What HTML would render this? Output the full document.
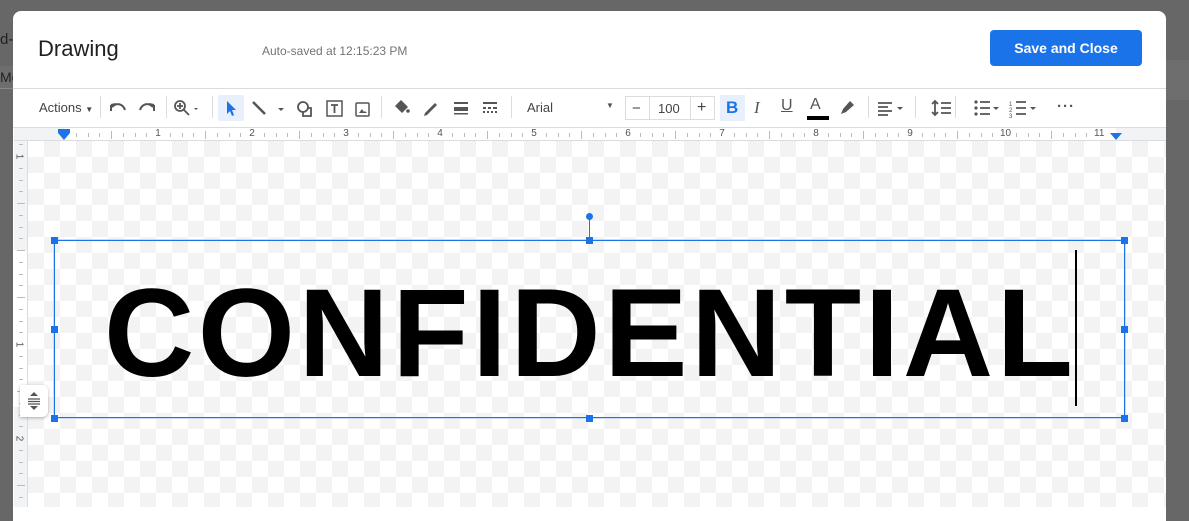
<!DOCTYPE html>
<html><head><meta charset="utf-8"><style>
*{margin:0;padding:0;box-sizing:border-box}
body{width:1189px;height:507px;overflow:hidden;background:#676767;font-family:"Liberation Sans",Arial,sans-serif;position:relative}
.a{position:absolute}
#dlg{left:13px;top:11px;width:1153px;height:510px;background:#fff;border-radius:8px 8px 0 0;overflow:hidden}
.sep{position:absolute;top:96px;width:1px;height:22px;background:#dadce0}
.tick{position:absolute;background:#bbb}
</style></head><body>
<div class="a" style="left:0;top:31px;width:13px;font-size:15px;color:#222;white-space:nowrap;overflow:hidden">d-c</div>
<div class="a" style="left:0;top:66px;width:13px;height:22px;background:#6e6e6e"></div>
<div class="a" style="left:0;top:69px;width:13px;font-size:14px;color:#222;white-space:nowrap;overflow:hidden">Me</div>
<div class="a" style="left:0;top:88px;width:13px;height:1px;background:#888"></div>
<div class="a" style="left:1166px;top:60px;width:23px;height:40px;background:#6e6e6e"></div>
<div id="dlg" class="a"></div>
<div class="a" style="left:38px;top:36px;font-size:22px;color:#202124">Drawing</div>
<div class="a" style="left:262px;top:44px;font-size:12px;color:#70757a">Auto-saved at 12:15:23 PM</div>
<div class="a" style="left:990px;top:30px;width:152px;height:36px;background:#1a73e8;border-radius:4px;color:#fff;font-size:14px;font-weight:bold;text-align:center;line-height:36px">Save and Close</div>
<div class="a" style="left:13px;top:88px;width:1153px;height:1px;background:#dadce0"></div>
<div class="a" style="left:39px;top:100px;font-size:13px;color:#444">Actions <span style="font-size:8px">▼</span></div>
<div class="sep" style="left:100px"></div>
<svg class="a" style="left:108px;top:99px" width="90" height="18" viewBox="0 0 90 18"><path d="M3 6v6M3 6l5-1M4 8c5-5 11-3 13 3" stroke="#555" stroke-width="2" fill="none"/><path d="M46 6v6M46 6l-5-1M45 8c-5-5-11-3-13 3" stroke="#555" stroke-width="2" fill="none"/><circle cx="72" cy="7" r="5" stroke="#555" stroke-width="1.8" fill="none"/><path d="M76 11l5 5M72 4v6M69 7h6" stroke="#555" stroke-width="1.8"/><path d="M86 9h4l-2 2z" fill="#555"/></svg>
<div class="sep" style="left:166px"></div>
<div class="sep" style="left:212px"></div>
<div class="a" style="left:218px;top:95px;width:26px;height:26px;background:#e8f0fe;border-radius:2px"></div>
<svg class="a" style="left:223px;top:99px" width="150" height="20" viewBox="0 0 150 20"><path d="M4 2l9 9-4 0 2 5-2 1-2-5-3 3z" fill="#1a73e8"/><path d="M30 3l12 12" stroke="#555" stroke-width="2.5"/><path d="M55 9h6l-3 3z" fill="#555"/><circle cx="80" cy="8" r="5" stroke="#555" stroke-width="1.8" fill="none"/><path d="M84 9h4v8h-8v-4" stroke="#555" stroke-width="1.8" fill="none"/><rect x="104" y="2" width="15" height="15" stroke="#555" stroke-width="1.5" fill="none"/><path d="M108 6h7M111.5 6v8" stroke="#555" stroke-width="1.8"/><rect x="133" y="4" width="13" height="13" rx="1" stroke="#555" stroke-width="1.5" fill="none"/><path d="M136 14l3-4 2 3 1-1 2 2z" fill="#555"/></svg>
<div class="sep" style="left:381px"></div>
<svg class="a" style="left:392px;top:98px" width="110" height="20" viewBox="0 0 110 20"><path d="M3 8l6-6 7 7-6 6z" fill="#555"/><circle cx="16" cy="13" r="1.8" fill="#555"/><path d="M33 15l10-10 2 2-10 10-3 1z" fill="#555"/><rect x="62" y="4" width="14" height="2" fill="#555"/><rect x="62" y="9" width="14" height="4" fill="#555"/><rect x="62" y="15" width="14" height="1.5" fill="#555"/><path d="M91 5h14M91 10h3M96 10h3M101 10h4M91 14h2M95 14h2M99 14h2M103 14h2" stroke="#555" stroke-width="2"/></svg>
<div class="sep" style="left:511px"></div>
<div class="a" style="left:527px;top:100px;font-size:13px;color:#444">Arial</div>
<div class="a" style="left:606px;top:101px;font-size:8px;color:#555">▼</div>
<div class="a" style="left:625px;top:96px;width:90px;height:24px;border:1px solid #dadce0"></div>
<div class="a" style="left:649px;top:96px;width:1px;height:24px;background:#dadce0"></div>
<div class="a" style="left:690px;top:96px;width:1px;height:24px;background:#dadce0"></div>
<div class="a" style="left:632px;top:100px;font-size:15px;color:#444">−</div>
<div class="a" style="left:658px;top:101px;font-size:13px;color:#444">100</div>
<div class="a" style="left:697px;top:99px;font-size:16px;color:#444">+</div>
<div class="a" style="left:720px;top:95px;width:25px;height:26px;background:#e8f0fe"></div>
<div class="a" style="left:726px;top:98px;font-size:17px;font-weight:bold;color:#1a73e8">B</div>
<div class="a" style="left:754px;top:98px;font-size:17px;font-style:italic;color:#555;font-family:'Liberation Serif',serif">I</div>
<div class="a" style="left:781px;top:97px;font-size:16px;color:#555;text-decoration:underline">U</div>
<div class="a" style="left:810px;top:96px;font-size:16px;color:#555">A</div>
<div class="a" style="left:807px;top:116px;width:22px;height:4px;background:#000"></div>
<svg class="a" style="left:838px;top:98px" width="200" height="20" viewBox="0 0 200 20"><path d="M3 16l2-5 7-8 4 4-8 7z" fill="#555"/><path d="M40 5h14M40 9h10M40 13h14M40 17h10" stroke="#555" stroke-width="1.8"/><path d="M59 9h6l-3 3z" fill="#555"/><path d="M97 3v14M94 6l3-3 3 3M94 14l3 3 3-3M103 5h10M103 10h10M103 15h10" stroke="#555" stroke-width="1.8" fill="none"/><circle cx="138" cy="4" r="1.6" fill="#555"/><circle cx="138" cy="10" r="1.6" fill="#555"/><circle cx="138" cy="16" r="1.6" fill="#555"/><path d="M142 4h10M142 10h10M142 16h10" stroke="#555" stroke-width="1.8"/><path d="M155 9h6l-3 3z" fill="#555"/><path d="M178 4h10M178 10h10M178 16h10" stroke="#555" stroke-width="1.8"/><text x="171" y="8" font-size="6" fill="#555">1</text><text x="171" y="14" font-size="6" fill="#555">2</text><text x="171" y="20" font-size="6" fill="#555">3</text><path d="M192 9h6l-3 3z" fill="#555"/></svg>
<div class="sep" style="left:868px"></div>
<div class="sep" style="left:915px"></div>
<div class="sep" style="left:955px"></div>
<div class="a" style="left:1057px;top:98px;font-size:15px;color:#555;letter-spacing:1px;font-weight:bold">···</div>
<div class="a" style="left:13px;top:127px;width:1153px;height:1px;background:#dadce0"></div>
<div class="a" style="left:28px;top:141px;width:1138px;height:366px;background-color:#fff;background-image:conic-gradient(#f3f3f3 25%,#fff 0 50%,#f3f3f3 0 75%,#fff 0);background-size:32px 32px"></div>
<div class="a" style="left:14px;top:128px;width:1152px;height:13px;background:#f1f3f4;border-bottom:1px solid #dadce0"></div>
<div class="a" style="left:64px;top:128px;width:1052px;height:13px;background:#fff;border-bottom:1px solid #dadce0"></div>
<div class="a" style="left:14px;top:141px;width:14px;height:366px;background:#f1f3f4;border-right:1px solid #dadce0"></div>
<div class="a" style="left:14px;top:250px;width:14px;height:157px;background:#fff;border-right:1px solid #dadce0"></div>
<div id="rt"></div>
<div class="a" style="left:58px;top:129px;width:12px;height:4px;background:#1a73e8"></div>
<svg class="a" style="left:57px;top:133px" width="14" height="8"><path d="M1 0h12l-6 7z" fill="#1a73e8"/></svg>
<svg class="a" style="left:1109px;top:133px" width="14" height="8"><path d="M1 0h12l-6 7z" fill="#1a73e8"/></svg>
<div class="a" style="left:54px;top:240px;width:1071px;height:178px;border:1.5px solid #1a73e8;box-shadow:0 0 0 1px #c6dafc"></div>
<div class="a" style="left:589px;top:218px;width:1px;height:22px;background:#1a73e8"></div>
<div class="a" style="left:586px;top:213px;width:7px;height:7px;border-radius:50%;background:#1a73e8"></div>
<div class="a" style="left:51px;top:237px;width:7px;height:7px;background:#1a73e8"></div>
<div class="a" style="left:586px;top:237px;width:7px;height:7px;background:#1a73e8"></div>
<div class="a" style="left:1121px;top:237px;width:7px;height:7px;background:#1a73e8"></div>
<div class="a" style="left:51px;top:326px;width:7px;height:7px;background:#1a73e8"></div>
<div class="a" style="left:1121px;top:326px;width:7px;height:7px;background:#1a73e8"></div>
<div class="a" style="left:51px;top:415px;width:7px;height:7px;background:#1a73e8"></div>
<div class="a" style="left:586px;top:415px;width:7px;height:7px;background:#1a73e8"></div>
<div class="a" style="left:1121px;top:415px;width:7px;height:7px;background:#1a73e8"></div>
<div class="a" style="left:104px;top:264px;font-size:125px;font-weight:bold;color:#000;line-height:140px;white-space:nowrap;letter-spacing:3.5px">CONFIDENTIAL</div>
<div class="a" style="left:1075px;top:250px;width:2px;height:156px;background:#000"></div>
<div class="a" style="left:20px;top:385px;width:28px;height:32px;background:#fff;border-radius:0 6px 6px 0;box-shadow:0 1px 3px rgba(0,0,0,.3)"></div>
<svg class="a" style="left:25px;top:391px" width="18" height="20"><path d="M9 1l4 4H5zM9 19l4-4H5z" fill="#555"/><path d="M3 8h12M3 10.5h12M3 13h12" stroke="#555" stroke-width="1.3"/></svg>
<script>
var h='';
for(var i=0;i<=88;i++){var x=64+i*94/8;if(x>1160)break;var hf=i%4==0;
if(i%8==0&&i>0){h+='<div class="a" style="left:'+(x-4)+'px;top:128px;font-size:10px;color:#555;width:8px;text-align:center">'+(i/8)+'</div>';}
else h+='<div class="tick" style="left:'+x+'px;top:'+(hf?131:133)+'px;width:1px;height:'+(hf?8:4)+'px"></div>';}
for(var j=-10;j<=30;j++){var y=250+j*94/8;if(y<143||y>505)continue;
if(j%8==0&&j!=0){h+='<div class="a" style="left:16px;top:'+(y-5)+'px;font-size:10px;color:#555;transform:rotate(90deg)">'+Math.abs(j/8)+'</div>';}
else h+='<div class="tick" style="top:'+y+'px;left:'+(j%4==0?17:19)+'px;height:1px;width:'+(j%4==0?8:4)+'px"></div>';}
document.getElementById('rt').innerHTML=h;
</script>
</body></html>
